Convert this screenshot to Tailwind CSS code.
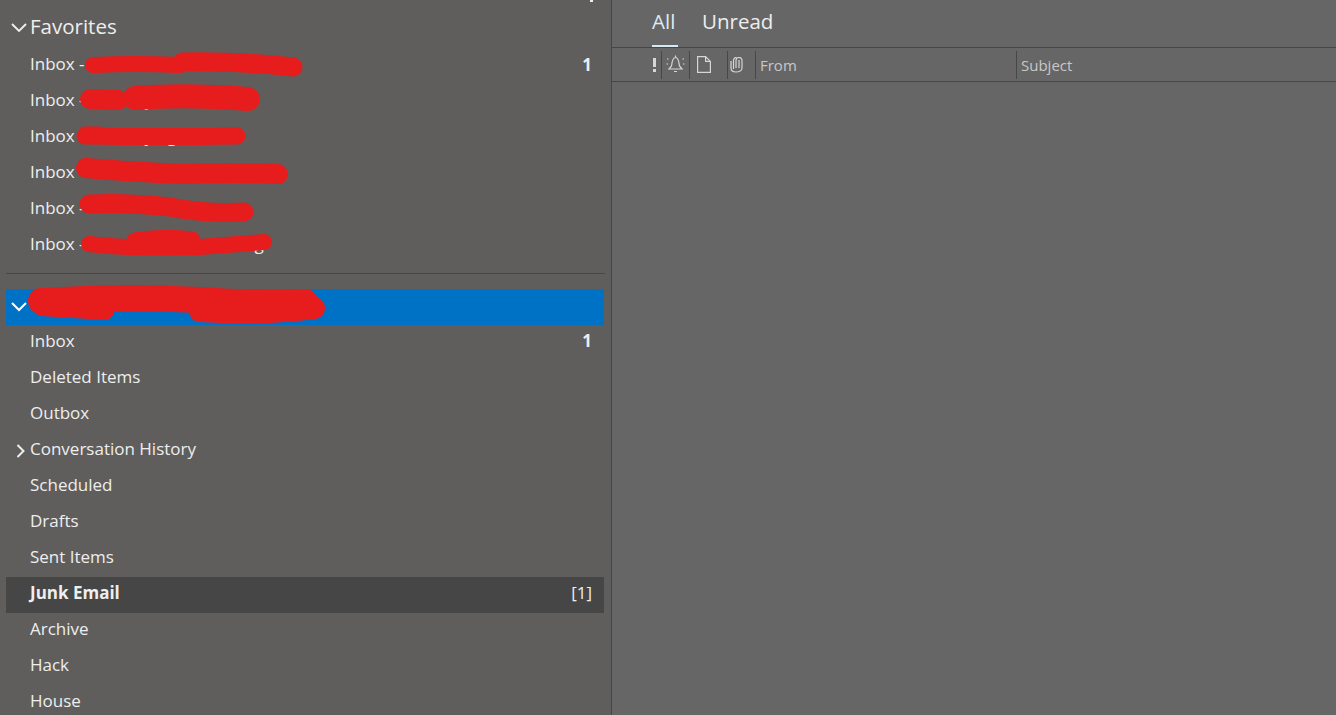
<!DOCTYPE html>
<html>
<head>
<meta charset="utf-8">
<script src="https://cdn.jsdelivr.net/npm/@tailwindcss/browser@4"></script>
</head>
<body class="m-0 overflow-hidden bg-[#666666]">
<div class="flex h-[715px] w-[1336px] overflow-hidden font-['Open_Sans',sans-serif] text-[#eeeeee]">
  <aside class="relative h-[715px] w-[612px] shrink-0 overflow-hidden border-r border-r-[#474747] bg-[#5f5e5c] pt-[9px] text-[17px]">
    <span class="absolute left-[590px] top-0 h-[2px] w-[3px] bg-[#eeeeee]"></span>
    <div class="flex h-[37px] items-center pl-[11px] text-[20.5px] leading-none">
      <svg class="mr-[3px] h-[10px] w-[16px]" viewBox="0 0 16 10" fill="none" stroke="#eeeeee" stroke-width="1.9"><path d="M1 1l7 7 7-7"/></svg>
      <span class="-mt-[3px]">Favorites</span>
    </div>
    <ul>
      <li class="flex h-[36px] items-center justify-between pl-[30px] pr-[19px]"><span class="-mt-[1px]">Inbox -</span><b class="mt-[2px] font-bold">1</b></li>
      <li class="flex h-[36px] items-center pl-[30px]"><span class="-mt-[1px]">Inbox -</span><span class="ml-[60px] -mt-[1px]">y</span></li>
      <li class="flex h-[36px] items-center pl-[30px]"><span class="-mt-[1px]">Inbox -</span><span class="ml-[60px] -mt-[1px]">y</span><span class="ml-[14px] -mt-[1px]">g</span></li>
      <li class="flex h-[36px] items-center pl-[30px]"><span class="-mt-[1px]">Inbox -</span><span class="ml-[60px] -mt-[1px]">y</span><span class="ml-[2px] -mt-[1px]">y</span></li>
      <li class="flex h-[36px] items-center pl-[30px]"><span class="-mt-[1px]">Inbox -</span></li>
      <li class="flex h-[36px] items-center pl-[30px]"><span class="-mt-[1px]">Inbox -</span><span class="ml-[170px] -mt-[1px]">g</span></li>
    </ul>
    <div class="ml-[6px] mt-[11px] h-px w-[599px] bg-[#474747]"></div>
    <div class="ml-[6px] mt-[15px] flex h-[36px] w-[598px] items-center bg-[#0072c6] pl-[5px]">
      <svg class="h-[10px] w-[16px]" viewBox="0 0 16 10" fill="none" stroke="#ffffff" stroke-width="2"><path d="M1 1l7 7 7-7"/></svg>
    </div>
    <ul>
      <li class="flex h-[36px] items-center justify-between pl-[30px] pr-[19px]"><span class="-mt-[4px]">Inbox</span><b class="-mt-[4px] font-bold">1</b></li>
      <li class="flex h-[36px] items-center pl-[30px]"><span class="-mt-[4px]">Deleted Items</span></li>
      <li class="flex h-[36px] items-center pl-[30px]"><span class="-mt-[4px]">Outbox</span></li>
      <li class="relative flex h-[36px] items-center pl-[30px]">
        <svg class="absolute left-[16px] top-[11px] h-[14px] w-[9px]" viewBox="0 0 9 14" fill="none" stroke="#eeeeee" stroke-width="2"><path d="M1.500 1l6 6-6 6"/></svg>
        <span class="-mt-[4px]">Conversation History</span>
      </li>
      <li class="flex h-[36px] items-center pl-[30px]"><span class="-mt-[4px]">Scheduled</span></li>
      <li class="flex h-[36px] items-center pl-[30px]"><span class="-mt-[4px]">Drafts</span></li>
      <li class="flex h-[36px] items-center pl-[30px]"><span class="-mt-[4px]">Sent Items</span></li>
      <li class="ml-[6px] flex h-[36px] w-[598px] items-center justify-between bg-[#464646] pl-[24px] pr-[12px]"><b class="-mt-[4px] font-bold">Junk Email</b><span class="-mt-[4px]">[1]</span></li>
      <li class="flex h-[36px] items-center pl-[30px]"><span class="-mt-[4px]">Archive</span></li>
      <li class="flex h-[36px] items-center pl-[30px]"><span class="-mt-[4px]">Hack</span></li>
      <li class="flex h-[36px] items-center pl-[30px]"><span class="-mt-[4px]">House</span></li>
    </ul>
    <svg class="absolute left-0 top-0 h-[715px] w-[611px]" viewBox="0 0 611 715" fill="none" stroke="#e71d1d" stroke-linecap="round" stroke-linejoin="round">
      <path stroke-width="16" d="M93 65Q135 63 180 65"/>
      <path stroke-width="19" d="M182 62Q240 61 293 67"/>
      <path stroke-width="20" d="M90 99L118 100"/>
      <path stroke-width="24" d="M135 98Q185 94 248 99"/>
      <path stroke-width="17" d="M85 136Q160 137 237 136"/>
      <path stroke-width="9" d="M84 131L100 131"/>
      <path stroke-width="20" d="M86 168Q130 172 185 174Q235 172 278 174"/>
      <path stroke-width="9" d="M84 163L105 165"/>
      <path stroke-width="19" d="M89 204Q125 202 170 207Q205 214 244 212"/>
      <path stroke-width="16" d="M89 244Q130 249 200 247L264 242"/>
      <path stroke-width="17" d="M135 241Q165 236 192 240"/>
      <path stroke-width="26" d="M41 301Q120 296 200 300Q250 304 305 302"/>
      <path stroke-width="18" d="M42 307L105 311"/>
      <path stroke-width="22" d="M200 311Q260 315 314 308"/>
    </svg>
  </aside>
  <main class="flex-1 bg-[#666666]">
    <div class="flex h-[47px] items-start pl-[40px] text-[20.5px]">
      <div class="mr-[24px] flex h-[47px] w-[26px] flex-col text-[#dcebf7]">
        <span class="mt-[5px] leading-[32px]">All</span>
        <span class="mt-auto h-[2px] w-[26px] bg-[#d7e8f5]"></span>
      </div>
      <span class="mt-[5px] leading-[32px]">Unread</span>
    </div>
    <div class="flex h-[35px] items-center border-y border-y-[#474747] pl-[38px] text-[15px] text-[#c8c8c8]">
      <div class="flex h-[28px] w-[12px] items-center justify-start border-r border-r-[#474747] pl-[2px]">
        <svg class="h-[16px] w-[5px]" viewBox="0 0 5 16" fill="#d6d6d6"><path d="M1 1h3v9H1zM1 12h3v3H1z"/></svg>
      </div>
      <div class="flex h-[28px] w-[28px] items-center justify-start border-r border-r-[#474747] pl-[4px]">
        <svg class="h-[19px] w-[19px]" viewBox="0 0 19 19" fill="none" stroke="#d6d6d6" stroke-width="1.2"><path d="M3 14h13l-2.500-3C13 6.500 12 2.500 9.500 2.500S6 6.500 5.500 11z"/><path d="M8 16.500h3M9.500 .5v1.500M1 4h1.500M16.500 4H18M.5 9H2M17 9h1.500"/></svg>
      </div>
      <div class="flex h-[28px] w-[38px] items-center border-r border-r-[#474747] pl-[7px]">
        <svg class="h-[17px] w-[14px]" viewBox="0 0 14 17" fill="none" stroke="#d6d6d6" stroke-width="1.2"><path d="M.6.600h8l4.800 4.800v11H.6zM8.600.600v4.800h4.800"/></svg>
      </div>
      <div class="flex h-[28px] w-[28px] items-center border-r border-r-[#474747] pl-[2px]">
        <svg class="h-[16px] w-[13px]" viewBox="0 0 13 16" fill="none" stroke="#d6d6d6" stroke-width="1.2"><path d="M1 4v7c0 2.500 2 4 5 4s6-1.500 6-4V3.500C12 1.500 10.500.500 9 .500S6 1.500 6 3.500V11M3.500 12V3.500C3.500 1.500 5 .500 6.500.500M9 3v8"/></svg>
      </div>
      <div class="flex h-[28px] w-[261px] items-center border-r border-r-[#474747] pl-[4px]"><span class="mt-[2px]">From</span></div>
      <div class="pl-[4px]"><span class="relative top-[1px]">Subject</span></div>
    </div>
  </main>
</div>
</body>
</html>
